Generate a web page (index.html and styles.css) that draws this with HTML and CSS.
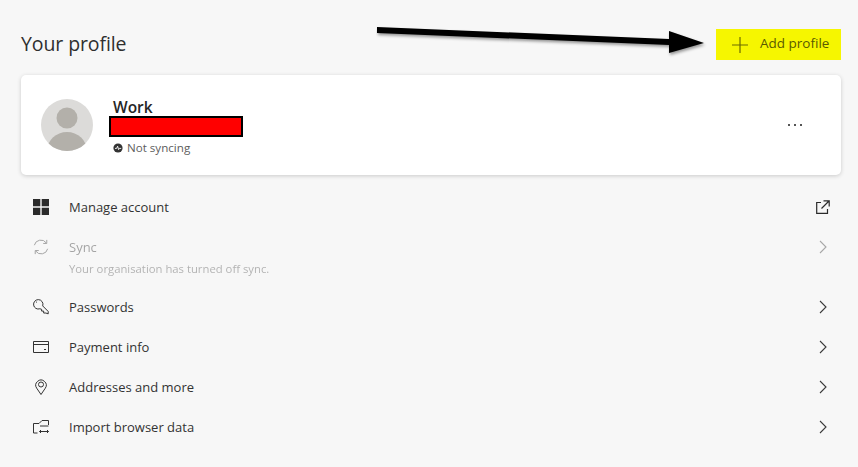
FILE: index.html
```html
<!DOCTYPE html>
<html lang="en">
<head>
<meta charset="utf-8">
<title>Your profile</title>
<link rel="stylesheet" href="styles.css">
</head>
<body>
<main class="page">
  <header class="head">
    <h1 class="title">Your profile</h1>
    <button class="add">
      <svg class="add-ico" viewBox="0 0 16 16"><path d="M8 0v16M0 8h16"/></svg>
      <span>Add profile</span>
    </button>
  </header>
  <section class="card">
    <svg class="avatar" viewBox="0 0 52 52">
      <defs><clipPath id="av"><circle cx="26" cy="26" r="26"/></clipPath></defs>
      <circle cx="26" cy="26" r="26" fill="#dcdbd9"/>
      <g clip-path="url(#av)" fill="#b3b0aa">
        <circle cx="26" cy="19" r="10.5"/>
        <ellipse cx="26" cy="52" rx="20" ry="19"/>
      </g>
    </svg>
    <div class="who">
      <div class="name">Work</div>
      <div class="redact"></div>
      <div class="status">
        <svg class="status-ico" viewBox="0 0 10 10"><circle cx="5" cy="5" r="4.6" fill="#333"/><path d="M2 5.4h1.600l1-2.200 1 3.400 .8-1.200H8.200" fill="none" stroke="#fff" stroke-width=".9"/></svg>
        <span>Not syncing</span>
      </div>
    </div>
    <div class="more"><i></i><i></i><i></i></div>
  </section>
  <nav class="list">
    <div class="row">
      <svg class="ico" viewBox="0 0 16 16"><path class="fill" d="M0 0h7.300v7.300H0zM8.700 0H16v7.300H8.700zM0 8.700h7.300V16H0zM8.700 8.700H16V16H8.700z"/></svg>
      <span class="label">Manage account</span>
      <svg class="end" viewBox="0 0 14 14"><path d="M5 2.500H.7v10.800h10.800V9M7.500 .8h5.700v5.700M13 1 5.500 8.500"/></svg>
    </div>
    <div class="row sync">
      <svg class="ico" viewBox="0 0 18 18"><path d="M1.500 7A7.500 7.500 0 0 1 15 4.500M16.500 11A7.500 7.500 0 0 1 3 13.500M15.500 1v4h-4M2.500 17v-4h4"/></svg>
      <div class="stack">
        <span class="label">Sync</span>
        <span class="note">Your organisation has turned off sync.</span>
      </div>
      <svg class="chev" viewBox="0 0 8 14"><path d="M1 1l6 6-6 6"/></svg>
    </div>
    <div class="row">
      <svg class="ico" viewBox="0 0 18 18"><path d="M6 .7a5.300 5.300 0 1 0 1.700 10.300l2 .6v2h2.300v2.200h2.500l2.600.9v-2.700L10.900 7.800A5.300 5.300 0 0 0 6 .7zM3.500 3.500h1"/></svg>
      <span class="label">Passwords</span>
      <svg class="chev" viewBox="0 0 8 14"><path d="M1 1l6 6-6 6"/></svg>
    </div>
    <div class="row">
      <svg class="ico" viewBox="0 0 16 12"><path d="M.5.500h15v11H.5zM.5 3.500h15M11 8.500h2"/></svg>
      <span class="label">Payment info</span>
      <svg class="chev" viewBox="0 0 8 14"><path d="M1 1l6 6-6 6"/></svg>
    </div>
    <div class="row">
      <svg class="ico" viewBox="0 0 12 16"><path d="M6 15.500 1.700 9.200A5.200 5.200 0 1 1 10.300 9.200z"/><circle cx="6" cy="5.500" r="2.500"/></svg>
      <span class="label">Addresses and more</span>
      <svg class="chev" viewBox="0 0 8 14"><path d="M1 1l6 6-6 6"/></svg>
    </div>
    <div class="row">
      <svg class="ico" viewBox="0 0 16 14"><path d="M6 3.500H.5v9.500h4M6 3.500 9 .5h6.500V5M7 6h8.500M6.500 11.500h9M8 10 6.500 11.500 8 13M14 10l1.500 1.500L14 13"/></svg>
      <span class="label">Import browser data</span>
      <svg class="chev" viewBox="0 0 8 14"><path d="M1 1l6 6-6 6"/></svg>
    </div>
  </nav>
  <svg class="arrow" viewBox="0 0 340 40">
    <defs><filter id="sh" x="-5%" y="-50%" width="110%" height="220%"><feDropShadow dx="1" dy="2" stdDeviation="1.500" flood-color="#000" flood-opacity=".4"/></filter></defs>
    <path filter="url(#sh)" d="M1 6 293 18V10L328 22 293 32V24L1 12z"/>
  </svg>
</main>
</body>
</html>
```
FILE: styles.css
```css
* { box-sizing: border-box; }
html, body { margin: 0; }
body {
  background: #f7f7f7;
  color: #333;
  font-family: "Open Sans", "Noto Sans", "Liberation Sans", sans-serif;
  width: 858px;
  height: 467px;
  overflow: hidden;
}
.page { position: relative; padding: 29px 17px 0 21px; }
.head { display: flex; justify-content: space-between; align-items: center; height: 31px; margin-bottom: 15px; }
.title { margin: 0 0 2px; font-size: 19.500px; font-weight: 400; color: #2f2f2f; letter-spacing: -.1px; }
.add {
  display: flex; align-items: center; gap: 12px;
  width: 125px; height: 31px; padding: 0 0 0 16px;
  background: #f6f600; border: 0; color: #5a5a00;
  font: inherit; font-size: 13.500px;
}
.add span { margin-bottom: 3px; }
.add-ico { width: 16px; height: 16px; fill: none; stroke: #6b6b00; stroke-width: 1.200; }
.card {
  display: flex; align-items: center;
  height: 100px; padding: 0 39px 0 20px;
  background: #fff; border-radius: 5px;
  box-shadow: 0 1px 4px rgba(0,0,0,.18);
}
.avatar { width: 52px; height: 52px; flex: none; }
.who { margin-left: 16px; display: flex; flex-direction: column; flex: 1; padding-top: 6px; }
.name { font-size: 15.500px; font-weight: 600; color: #262626; line-height: 18px; margin-left: 4px; }
.redact { width: 134px; height: 21px; background: #f00; border: 2px solid #000; }
.status { display: flex; align-items: center; gap: 4px; margin: 1px 0 0 4px; font-size: 11.600px; line-height: 20px; color: #5d5d5d; }
.status-ico { width: 10px; height: 10px; }
.more { display: flex; gap: 4px; }
.more i { width: 2px; height: 2px; background: #555; display: block; }
.list { margin-top: 12px; }
.row { display: flex; align-items: center; height: 40px; padding: 0 14px 0 12px; }
.sync { height: 60px; opacity: .42; align-items: flex-start; padding-top: 12px; }
.sync .chev { margin-top: 1px; }
.ico { width: 16px; height: 16px; flex: none; fill: none; stroke: #333; stroke-width: 1; }
.ico * { vector-effect: non-scaling-stroke; }
.ico .fill { fill: #2b2b2b; stroke: none; }
.label { margin-left: 20px; font-size: 13px; font-weight: 500; color: #333; line-height: 18px; flex: 1; }
.stack { display: flex; flex-direction: column; flex: 1; margin-left: 20px; margin-top: -1px; }
.stack .label { margin: 0; flex: none; }
.note { font-size: 11.300px; line-height: 15px; margin-top: 5px; font-weight: 400; color: #555; }
.chev { width: 8px; height: 14px; flex: none; fill: none; stroke: #3a3a3a; stroke-width: 1.100; }
.end { width: 14px; height: 14px; flex: none; fill: none; stroke: #2b2b2b; stroke-width: 1.200; margin-right: -3px; }
.arrow { position: absolute; left: 376px; top: 21px; width: 340px; height: 40px; fill: #000; }
```
